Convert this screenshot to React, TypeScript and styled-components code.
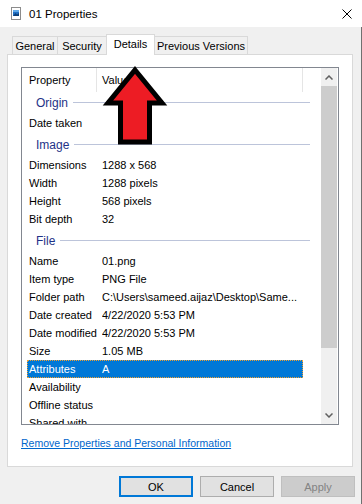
import styled, { createGlobalStyle } from 'styled-components'

const GlobalStyle = createGlobalStyle`
  html, body {
    margin: 0;
    padding: 0;
    background: #f0f0f0;
  }
  body {
    font-family: "Liberation Sans", Arial, sans-serif;
    font-size: 11px;
    color: #000;
  }
  * { box-sizing: border-box; }
`

const Window = styled.div`
  position: relative;
  width: 362px;
  height: 504px;
  display: flex;
  flex-direction: column;
  overflow: hidden;
  background: #f0f0f0;
`

const TitleBar = styled.div`
  flex: none;
  height: 27px;
  background: #fff;
  display: flex;
  align-items: center;
  padding: 0 10px 0 11px;
`

const TitleText = styled.span`
  flex: 1;
  margin-left: 8px;
  font-size: 11.5px;
`

const Body = styled.div`
  flex: 1;
  display: flex;
  flex-direction: column;
  padding: 7px 6px 0 7px;
  border-right: 1px solid #707070;
`

const TabStrip = styled.div`
  display: flex;
  align-items: flex-end;
  height: 20px;
  padding-left: 5px;
  position: relative;
  z-index: 1;
`

const Tab = styled.div<{ $active?: boolean; $w: number }>`
  width: ${(p) => p.$w}px;
  height: ${(p) => (p.$active ? 21 : 18)}px;
  margin-left: -1px;
  margin-bottom: ${(p) => (p.$active ? -1 : 0)}px;
  border: 1px solid #d9d9d9;
  border-bottom: none;
  background: ${(p) => (p.$active ? '#fff' : '#f0f0f0')};
  display: flex;
  align-items: center;
  justify-content: center;
  padding-bottom: ${(p) => (p.$active ? 3 : 0)}px;
  white-space: nowrap;
  &:first-child { margin-left: 0; }
`

const Panel = styled.div`
  flex: none;
  height: 413px;
  margin-right: 2px;
  background: #fff;
  border: 1px solid #d9d9d9;
  display: flex;
  flex-direction: column;
  padding: 12px 13px 0 13px;
`

const ListBox = styled.div`
  height: 358px;
  border: 1px solid #828790;
  display: flex;
  background: #fff;
`

const ListContent = styled.div`
  flex: 1;
  overflow: hidden;
  padding-left: 5px;
`

const HeaderRow = styled.div`
  display: flex;
  height: 22px;
`

const HeaderCell = styled.div<{ $w: number; $pad: number }>`
  width: ${(p) => p.$w}px;
  height: 24px;
  padding-left: ${(p) => p.$pad}px;
  padding-top: 6px;
  border-right: 1px solid #e5e5e5;
`

const GroupRow = styled.div`
  width: 283px;
  height: 24px;
  padding: 4px 0 2px 9px;
  display: flex;
  align-items: center;
`

const GroupLabel = styled.span`
  font-size: 12px;
  color: #1e3287;
`

const GroupLine = styled.div`
  flex: 1;
  height: 1px;
  margin: 0 0 1px 5px;
  background: #bcc4da;
`

const ItemRow = styled.div<{ $selected?: boolean }>`
  width: 276px;
  height: 18px;
  display: flex;
  align-items: center;
  white-space: nowrap;
  background: ${(p) => (p.$selected ? '#0078d7' : 'transparent')};
  color: ${(p) => (p.$selected ? '#fff' : '#000')};
  outline: ${(p) => (p.$selected ? '1px dotted #f0a030' : 'none')};
  outline-offset: -1px;
`

const LabelCell = styled.span`
  width: 75px;
  padding-left: 2px;
  flex: none;
`

const ValueCell = styled.span`
  flex: 1;
  overflow: hidden;
`

const ScrollBar = styled.div`
  width: 16px;
  margin-right: 1px;
  background: #f0f0f0;
  display: flex;
  flex-direction: column;
`

const ScrollButton = styled.div`
  height: 18px;
  display: flex;
  align-items: center;
  justify-content: center;
`

const Thumb = styled.div`
  height: 262px;
  background: #cdcdcd;
`

const Track = styled.div`
  flex: 1;
`

const LinkText = styled.a`
  margin-top: 11px;
  line-height: 14px;
  font-size: 10.5px;
  color: #0066cc;
  text-decoration: underline;
  align-self: flex-start;
`

const ButtonRow = styled.div`
  display: flex;
  justify-content: flex-end;
  gap: 7px;
  margin-top: 9px;
`

const Button = styled.div<{ $primary?: boolean; $disabled?: boolean }>`
  width: 74px;
  height: 21px;
  display: flex;
  align-items: center;
  justify-content: center;
  background: ${(p) => (p.$disabled ? '#cccccc' : '#e1e1e1')};
  border: ${(p) => (p.$primary ? '2px solid #0078d7' : p.$disabled ? '1px solid #bfbfbf' : '1px solid #adadad')};
  color: ${(p) => (p.$disabled ? '#838383' : '#000')};
`

const ArrowOverlay = styled.svg`
  position: absolute;
  left: 0;
  top: 0;
  pointer-events: none;
`

type Item = { label: string; value?: string; selected?: boolean }
type Group = { name: string; items: Item[] }

const groups: Group[] = [
  { name: 'Origin', items: [{ label: 'Date taken' }] },
  {
    name: 'Image',
    items: [
      { label: 'Dimensions', value: '1288 x 568' },
      { label: 'Width', value: '1288 pixels' },
      { label: 'Height', value: '568 pixels' },
      { label: 'Bit depth', value: '32' },
    ],
  },
  {
    name: 'File',
    items: [
      { label: 'Name', value: '01.png' },
      { label: 'Item type', value: 'PNG File' },
      { label: 'Folder path', value: 'C:\\Users\\sameed.aijaz\\Desktop\\Same...' },
      { label: 'Date created', value: '4/22/2020 5:53 PM' },
      { label: 'Date modified', value: '4/22/2020 5:53 PM' },
      { label: 'Size', value: '1.05 MB' },
      { label: 'Attributes', value: 'A', selected: true },
      { label: 'Availability' },
      { label: 'Offline status' },
      { label: 'Shared with' },
    ],
  },
]

function FileIcon() {
  return (
    <svg width="10" height="13" viewBox="0 0 10 13">
      <rect x="0.5" y="0.5" width="9" height="12" fill="#fff" stroke="#8c8c8c" />
      <rect x="2" y="3" width="6" height="6" fill="#1f6fc4" />
      <rect x="2" y="3" width="6" height="2" fill="#5fa8e8" />
      <path d="M2 9 L4.5 6 L6 7.5 L8 6 L8 9 Z" fill="#0d3f78" />
    </svg>
  )
}

function CloseIcon() {
  return (
    <svg width="10" height="10" viewBox="0 0 10 10">
      <path d="M0.5 0.5 L9.5 9.5 M9.5 0.5 L0.5 9.5" stroke="#000" strokeWidth="1" />
    </svg>
  )
}

function Chevron({ down }: { down?: boolean }) {
  return (
    <svg width="8" height="5" viewBox="0 0 8 5">
      <path d={down ? 'M0.5 0.5 L4 4 L7.5 0.5' : 'M0.5 4.5 L4 1 L7.5 4.5'} fill="none" stroke="#606060" strokeWidth="1.5" />
    </svg>
  )
}

export default function App() {
  return (
    <>
      <GlobalStyle />
      <Window>
        <TitleBar>
          <FileIcon />
          <TitleText>01 Properties</TitleText>
          <CloseIcon />
        </TitleBar>
        <Body>
          <TabStrip>
            <Tab $w={46}>General</Tab>
            <Tab $w={50}>Security</Tab>
            <Tab $w={49} $active>Details</Tab>
            <Tab $w={94}>Previous Versions</Tab>
          </TabStrip>
          <Panel>
            <ListBox>
              <ListContent>
                <HeaderRow>
                  <HeaderCell $w={70} $pad={2}>Property</HeaderCell>
                  <HeaderCell $w={206} $pad={5}>Value</HeaderCell>
                </HeaderRow>
                {groups.map((g) => (
                  <div key={g.name}>
                    <GroupRow>
                      <GroupLabel>{g.name}</GroupLabel>
                      <GroupLine />
                    </GroupRow>
                    {g.items.map((it) => (
                      <ItemRow key={it.label} $selected={it.selected}>
                        <LabelCell>{it.label}</LabelCell>
                        <ValueCell>{it.value}</ValueCell>
                      </ItemRow>
                    ))}
                  </div>
                ))}
              </ListContent>
              <ScrollBar>
                <ScrollButton>
                  <Chevron />
                </ScrollButton>
                <Thumb />
                <Track />
                <ScrollButton>
                  <Chevron down />
                </ScrollButton>
              </ScrollBar>
            </ListBox>
            <LinkText>Remove Properties and Personal Information</LinkText>
          </Panel>
          <ButtonRow>
            <Button $primary>OK</Button>
            <Button>Cancel</Button>
            <Button $disabled>Apply</Button>
          </ButtonRow>
        </Body>
        <ArrowOverlay width="362" height="504" viewBox="0 0 362 504">
          <polygon
            points="135,70 162,103 149.5,103 149.5,142 120.5,142 120.5,103 108,103"
            fill="#ed1c24"
            stroke="#000"
            strokeWidth="5"
            strokeLinejoin="miter"
            strokeMiterlimit="10"
          />
        </ArrowOverlay>
      </Window>
    </>
  )
}
